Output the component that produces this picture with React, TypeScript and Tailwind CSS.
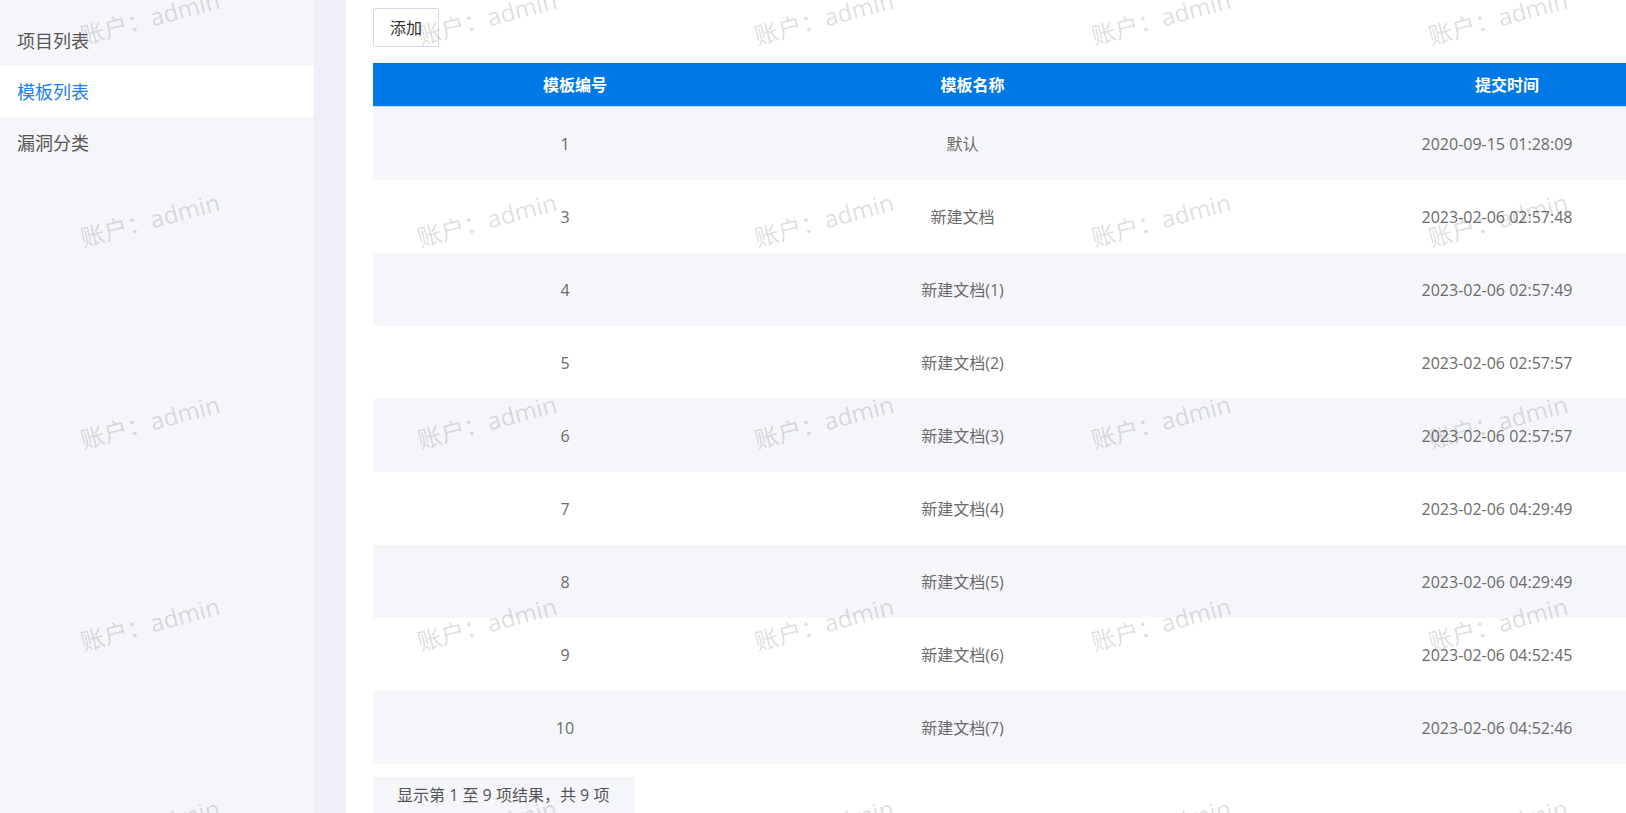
import React from "react";

const rows = [
  { id: "1", name: "默认", time: "2020-09-15 01:28:09" },
  { id: "3", name: "新建文档", time: "2023-02-06 02:57:48" },
  { id: "4", name: "新建文档(1)", time: "2023-02-06 02:57:49" },
  { id: "5", name: "新建文档(2)", time: "2023-02-06 02:57:57" },
  { id: "6", name: "新建文档(3)", time: "2023-02-06 02:57:57" },
  { id: "7", name: "新建文档(4)", time: "2023-02-06 04:29:49" },
  { id: "8", name: "新建文档(5)", time: "2023-02-06 04:29:49" },
  { id: "9", name: "新建文档(6)", time: "2023-02-06 04:52:45" },
  { id: "10", name: "新建文档(7)", time: "2023-02-06 04:52:46" },
];

const marks: { x: number; y: number }[] = [];
for (let j = 0; j < 5; j++) {
  for (let i = 0; i < 5; i++) {
    marks.push({ x: 150 + 337 * i, y: 18 + 202 * j });
  }
}

export default function App() {
  return (
    <div
      className="relative flex h-[813px] w-[1626px] overflow-hidden bg-white"
      style={{ fontFamily: '"Open Sans", "Noto Sans CJK SC", sans-serif' }}
    >
      {/* Sidebar */}
      <div className="w-[314px] shrink-0 bg-[#f5f6fa] pt-[15px]">
        <div className="flex h-[51px] items-center pl-[17px] pt-[2px] text-[18px] text-[#555]">项目列表</div>
        <div className="flex h-[51px] items-center bg-white pl-[17px] pt-[2px] text-[18px] text-[#1d7ff0]">模板列表</div>
        <div className="flex h-[51px] items-center pl-[17px] pt-[2px] text-[18px] text-[#555]">漏洞分类</div>
      </div>
      <div className="w-[32px] shrink-0 bg-[#eeeff7]" />

      {/* Content */}
      <div className="min-w-0 flex-1 overflow-hidden pl-[27px] pt-[8px]">
        <button className="flex h-[39px] w-[66px] items-center justify-center rounded-[2px] border border-[#d8d8e8] bg-white text-[16px] text-[#333]">
          添加
        </button>
        <div className="mt-[16px] w-[1453px]">
          <div className="flex h-[44px] border-b border-[#cdd9ee] bg-[#0079e7] text-[16px] font-bold text-white">
            <div className="flex w-[384px] items-center justify-center pl-[20px]">模板编号</div>
            <div className="flex w-[411px] items-center justify-center pl-[20px]">模板名称</div>
            <div className="flex w-[658px] items-center justify-center pl-[20px]">提交时间</div>
          </div>
          {rows.map((r, idx) => (
            <div
              key={r.id}
              className={`flex h-[73px] text-[16px] text-[#6b6b6b] ${idx % 2 === 0 ? "bg-[#f5f6fa]" : "bg-white"}`}
            >
              <div className="flex w-[384px] items-center justify-center">{r.id}</div>
              <div className="flex w-[411px] items-center justify-center">{r.name}</div>
              <div className="flex w-[658px] items-center justify-center">{r.time}</div>
            </div>
          ))}
        </div>
        <div className="mt-[13px] flex h-[36px] w-[262px] items-center bg-[#f5f6fa] pl-[24px] text-[16px] text-[#555]">
          显示第 1 至 9 项结果，共 9 项
        </div>
      </div>

      {/* Watermark overlay */}
      <div className="pointer-events-none absolute inset-0">
        {marks.map((m, k) => (
          <div
            key={k}
            className="absolute -translate-x-1/2 -translate-y-1/2 -rotate-[15deg] whitespace-nowrap text-[24px] text-black/15"
            style={{ left: m.x, top: m.y }}
          >
            账户：admin
          </div>
        ))}
      </div>
    </div>
  );
}
